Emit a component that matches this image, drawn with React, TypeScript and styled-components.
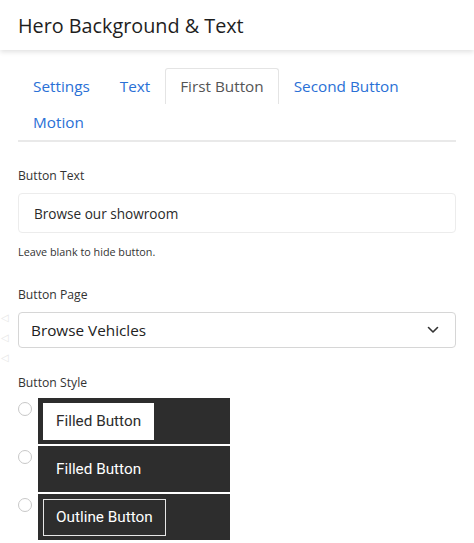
import * as React from "react";
import styled, { createGlobalStyle } from "styled-components";

const GlobalStyle = createGlobalStyle`
  html, body {
    margin: 0;
    padding: 0;
    background: #ffffff;
  }
  body {
    font-family: "Open Sans", "Liberation Sans", sans-serif;
    color: #333333;
  }
  * {
    box-sizing: border-box;
  }
`;

const Page = styled.div`
  width: 474px;
  height: 543px;
  overflow: hidden;
  position: relative;
`;

const Header = styled.header`
  height: 50px;
  padding: 0 18px;
  display: flex;
  align-items: center;
  background: #ffffff;
  box-shadow: 0 2px 5px rgba(0, 0, 0, 0.12);
  position: relative;
  z-index: 1;
`;

const Title = styled.h1`
  margin: 0;
  font-size: 19.8px;
  font-weight: 400;
  color: #1e1e1e;
`;

const Body = styled.div`
  padding: 18px 18px 0 18px;
`;

const TabList = styled.div`
  display: flex;
  flex-wrap: wrap;
  border-bottom: 2px solid #e9e9e9;
`;

const Tab = styled.button<{ $active?: boolean }>`
  height: 36px;
  padding: 0 14px 1px;
  font-family: "Open Sans", "Liberation Sans", sans-serif;
  font-size: 15.3px;
  background: #ffffff;
  color: ${(p) => (p.$active ? "#555555" : "#2a70d6")};
  border: 1px solid ${(p) => (p.$active ? "#e4e4e4" : "transparent")};
  border-bottom: none;
  border-radius: 3px 3px 0 0;
  cursor: pointer;
`;

const Field = styled.div<{ $gap?: number }>`
  margin-top: ${(p) => p.$gap ?? 0}px;
`;

const Label = styled.div`
  font-size: 12.2px;
  color: #333333;
  line-height: 18px;
  margin-bottom: 8px;
`;

const TextInput = styled.input`
  width: 100%;
  height: 40px;
  padding: 0 15px;
  font-family: "Open Sans", "Liberation Sans", sans-serif;
  font-size: 13.6px;
  color: #2a2a2a;
  border: 1px solid #ececec;
  border-radius: 4px;
  outline: none;
`;

const Help = styled.div`
  margin-top: 11px;
  font-size: 10.8px;
  color: #333333;
  line-height: 16px;
`;

const SelectBox = styled.div`
  height: 36px;
  display: flex;
  align-items: center;
  justify-content: space-between;
  padding: 0 16px 0 12px;
  border: 1px solid #d6d6d6;
  border-radius: 4px;
  font-size: 15.3px;
  color: #222222;
`;

const Options = styled.div`
  display: flex;
  flex-direction: column;
  gap: 2px;
  margin-top: -2px;
`;

const OptionRow = styled.label`
  display: flex;
  align-items: flex-start;
  gap: 6px;
`;

const Radio = styled.span`
  width: 14px;
  height: 14px;
  margin-top: 4px;
  flex: none;
  border: 1px solid #c8c8c8;
  border-radius: 50%;
  background: #ffffff;
`;

const Preview = styled.div`
  width: 192px;
  height: 46px;
  background: #2d2d2d;
  display: flex;
  align-items: center;
  padding-left: 5px;
`;

const PreviewButton = styled.span<{ $kind: "filled" | "plain" | "outline" }>`
  height: 37px;
  display: flex;
  align-items: center;
  padding: 0 12px 0 12px;
  font-family: Roboto, "Liberation Sans", sans-serif;
  font-size: 15.3px;
  color: ${(p) => (p.$kind === "filled" ? "#2d2d2d" : "#ffffff")};
  background: ${(p) => (p.$kind === "filled" ? "#ffffff" : "transparent")};
  border: 1px solid ${(p) => (p.$kind === "outline" ? "#e6e6e6" : "transparent")};
`;

const EdgeMarks = styled.div`
  position: absolute;
  left: 1px;
  top: 311px;
  display: flex;
  flex-direction: column;
  gap: 8px;
  font-size: 10px;
  line-height: 12px;
  color: #e6e6e6;
`;

const Chevron = () => (
  <svg width="12" height="8" viewBox="0 0 12 8" fill="none">
    <path d="M1.5 1.5 L6 6 L10.5 1.5" stroke="#333" strokeWidth="1.6" strokeLinecap="round" strokeLinejoin="round" />
  </svg>
);

const tabs = ["Settings", "Text", "First Button", "Second Button", "Motion"];

export default function App() {
  const [active, setActive] = React.useState<string>("First Button");

  return (
    <Page>
      <GlobalStyle />
      <Header>
        <Title>Hero Background &amp; Text</Title>
      </Header>
      <Body>
        <TabList>
          {tabs.map((t) => (
            <Tab key={t} $active={t === active} onClick={() => setActive(t)}>
              {t}
            </Tab>
          ))}
        </TabList>

        <Field $gap={25}>
          <Label>Button Text</Label>
          <TextInput defaultValue="Browse our showroom" />
          <Help>Leave blank to hide button.</Help>
        </Field>

        <Field $gap={26}>
          <Label>Button Page</Label>
          <SelectBox>
            <span>Browse Vehicles</span>
            <Chevron />
          </SelectBox>
        </Field>

        <Field $gap={26}>
          <Label>Button Style</Label>
          <Options>
            <OptionRow>
              <Radio />
              <Preview>
                <PreviewButton $kind="filled">Filled Button</PreviewButton>
              </Preview>
            </OptionRow>
            <OptionRow>
              <Radio />
              <Preview>
                <PreviewButton $kind="plain">Filled Button</PreviewButton>
              </Preview>
            </OptionRow>
            <OptionRow>
              <Radio />
              <Preview>
                <PreviewButton $kind="outline">Outline Button</PreviewButton>
              </Preview>
            </OptionRow>
          </Options>
        </Field>
      </Body>
      <EdgeMarks>
        <span>◁</span>
        <span>◁</span>
        <span>◁</span>
      </EdgeMarks>
    </Page>
  );
}
